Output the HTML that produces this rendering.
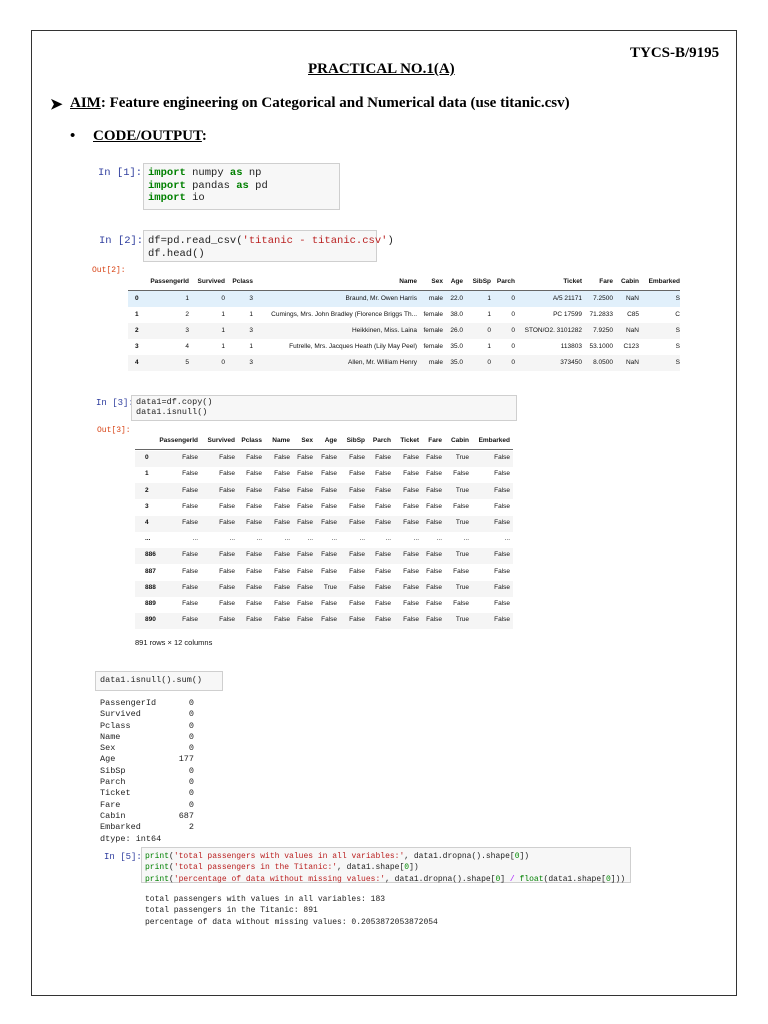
<!DOCTYPE html>
<html><head><meta charset="utf-8"><style>
*{margin:0;padding:0;box-sizing:border-box}
body{width:768px;height:1024px;background:#fff;position:relative;overflow:hidden;font-family:"Liberation Serif",serif;color:#000}
.a{position:absolute;white-space:nowrap}
.frame{position:absolute;left:31px;top:30px;width:706px;height:966px;border:1px solid #333}
.h{font-weight:bold;font-size:15px}
.code{position:absolute;background:#f7f7f7;border:1px solid #cfcfcf}
.m{font-family:"Liberation Mono","DejaVu Sans Mono",monospace;font-size:10.5px;line-height:12.5px;color:#222}
.p{color:#303f9f;font-family:"Liberation Mono",monospace;font-size:10.5px}
.o{color:#d84315;font-family:"Liberation Mono",monospace;font-size:8px}
.kw{color:#008000;font-weight:bold}
.s{color:#ba2121}
.t{font-family:"Liberation Sans",sans-serif;font-size:6.5px;color:#111}
.row{position:absolute;height:16px}
.sm{font-family:"Liberation Mono",monospace;font-size:8.5px;line-height:11.3px;color:#222}
</style></head><body>
<div class="frame"></div>
<div class="a h" style="left:630px;top:45px">TYCS-B/9195</div>
<div class="a h" style="left:308px;top:61px;text-decoration:underline">PRACTICAL NO.1(A)</div>
<div class="a h" style="left:50px;top:95px">&#10148;</div>
<div class="a h" style="left:70px;top:95px"><u>AIM</u>: Feature engineering on Categorical and Numerical data (use titanic.csv)</div>
<div class="a h" style="left:70px;top:128px">•</div>
<div class="a h" style="left:93px;top:128px"><u>CODE/OUTPUT</u>:</div>

<div class="a p" style="left:98px;top:167px">In [1]:</div>
<div class="code" style="left:143px;top:163px;width:197px;height:47px"></div>
<div class="a m" style="left:148px;top:167px"><span class="kw">import</span> numpy <span class="kw">as</span> np<br><span class="kw">import</span> pandas <span class="kw">as</span> pd<br><span class="kw">import</span> io</div>

<div class="a p" style="left:99px;top:235px">In [2]:</div>
<div class="code" style="left:143px;top:230px;width:234px;height:32px"></div>
<div class="a m" style="left:148px;top:235px">df=pd.read_csv(<span class="s">'titanic - titanic.csv'</span>)<br>df.head()</div>
<div class="a o" style="left:92px;top:266px">Out[2]:</div>

<div class="a" style="left:128px;top:290px;width:552px;height:1px;background:#666"></div>
<div class="row" style="left:128px;top:291px;width:552px;background:#e1f0fb"></div>
<div class="row" style="left:128px;top:323px;width:552px;background:#f5f5f5"></div>
<div class="row" style="left:128px;top:355px;width:552px;background:#f5f5f5"></div>
<div id="t1"></div>

<div class="a p" style="left:96px;top:398px;font-size:9px">In [3]:</div>
<div class="code" style="left:131px;top:395px;width:386px;height:26px"></div>
<div class="a m" style="left:136px;top:397px;font-size:8.5px;line-height:10px">data1=df.copy()<br>data1.isnull()</div>
<div class="a o" style="left:97px;top:426px">Out[3]:</div>
<div class="a" style="left:135px;top:449px;width:378px;height:1px;background:#666"></div>
<div id="t2"></div>
<div class="a t" style="left:135px;top:638px;font-size:7.5px">891 rows × 12 columns</div>

<div class="code" style="left:95px;top:671px;width:128px;height:20px"></div>
<div class="a sm" style="left:100px;top:675px">data1.isnull().sum()</div>
<div class="a sm" style="left:100px;top:698px">PassengerId<br>Survived<br>Pclass<br>Name<br>Sex<br>Age<br>SibSp<br>Parch<br>Ticket<br>Fare<br>Cabin<br>Embarked<br>dtype: int64</div>
<div class="a sm" style="left:160px;top:698px;width:34px;text-align:right">0<br>0<br>0<br>0<br>0<br>177<br>0<br>0<br>0<br>0<br>687<br>2</div>

<div class="a p" style="left:104px;top:852px;font-size:9px">In [5]:</div>
<div class="code" style="left:141px;top:847px;width:490px;height:36px"></div>
<div class="a sm" style="left:145px;top:851px;font-size:8px"><span style="color:#008000">print</span>(<span class="s">'total passengers with values in all variables:'</span>, data1.dropna().shape[<span style="color:#080">0</span>])<br><span style="color:#008000">print</span>(<span class="s">'total passengers in the Titanic:'</span>, data1.shape[<span style="color:#080">0</span>])<br><span style="color:#008000">print</span>(<span class="s">'percentage of data without missing values:'</span>, data1.dropna().shape[<span style="color:#080">0</span>] <span style="color:#a2f">/</span> <span style="color:#008000">float</span>(data1.shape[<span style="color:#080">0</span>]))</div>
<div class="a sm" style="left:145px;top:894px;font-size:8px">total passengers with values in all variables: 183<br>total passengers in the Titanic: 891<br>percentage of data without missing values: 0.2053872053872054</div>

<script>
function tbl(id,left,top,rh,ends,heads,rows,idxx){
 var h='';
 heads.forEach(function(t,i){h+='<div class="a t" style="font-weight:bold;left:'+(left+ends[i]-80)+'px;top:'+top+'px;width:80px;text-align:right">'+t+'</div>';});
 rows.forEach(function(r,j){var y=top+rh*(j+1)+1;
  h+='<div class="a t" style="font-weight:bold;left:'+idxx+'px;top:'+y+'px">'+r[0]+'</div>';
  for(var i=1;i<r.length;i++)h+='<div class="a t" style="left:'+(left+ends[i-1]-200)+'px;top:'+y+'px;width:200px;text-align:right">'+r[i]+'</div>';});
 document.getElementById(id).innerHTML=h;}
tbl('t1',0,278,16,[189,225,253,417,443,463,491,515,582,613,639,680],
['PassengerId','Survived','Pclass','Name','Sex','Age','SibSp','Parch','Ticket','Fare','Cabin','Embarked'],
[['0','1','0','3','Braund, Mr. Owen Harris','male','22.0','1','0','A/5 21171','7.2500','NaN','S'],
['1','2','1','1','Cumings, Mrs. John Bradley (Florence Briggs Th...','female','38.0','1','0','PC 17599','71.2833','C85','C'],
['2','3','1','3','Heikkinen, Miss. Laina','female','26.0','0','0','STON/O2. 3101282','7.9250','NaN','S'],
['3','4','1','1','Futrelle, Mrs. Jacques Heath (Lily May Peel)','female','35.0','1','0','113803','53.1000','C123','S'],
['4','5','0','3','Allen, Mr. William Henry','male','35.0','0','0','373450','8.0500','NaN','S']],135);
var F='False',T='True',r2=[];
var cab=[T,F,T,F,T,'...',T,F,T,F,T];
var idx=['0','1','2','3','4','...','886','887','888','889','890'];
for(var k=0;k<11;k++){var a=[idx[k]];for(var c=0;c<12;c++)a.push(k==5?'...':(c==10?cab[k]:(k==8&&c==5?T:F)));r2.push(a);}
var g='';[0,2,4,6,8,10].forEach(function(k){g+='<div class="row" style="left:135px;top:'+(451+k*16.2)+'px;width:378px;background:#f5f5f5"></div>';});
document.getElementById('t2').insertAdjacentHTML('beforebegin',g);
tbl('t2',0,437,16.2,[198,235,262,290,313,337,365,391,419,442,469,510],
['PassengerId','Survived','Pclass','Name','Sex','Age','SibSp','Parch','Ticket','Fare','Cabin','Embarked'],r2,145);
</script>
</body></html>
